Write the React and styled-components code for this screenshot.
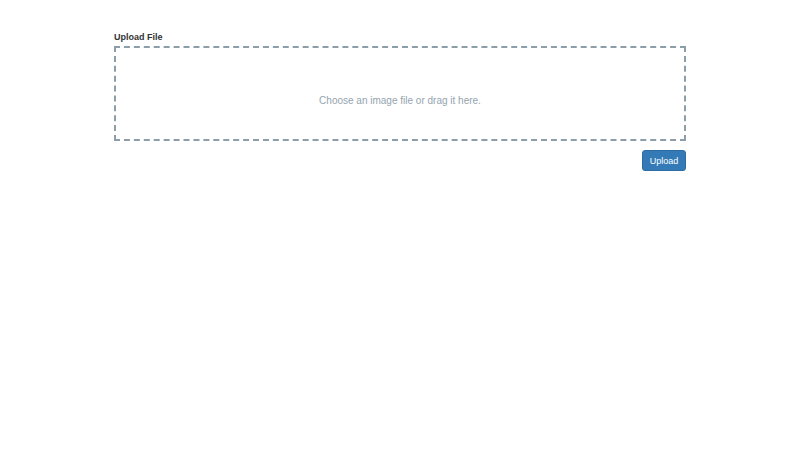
import React from "react";
import styled, { createGlobalStyle } from "styled-components";

const Global = createGlobalStyle`
  html, body { margin: 0; padding: 0; background: #fff; }
  body { font-family: "Liberation Sans", Arial, sans-serif; color: #333; }
`;

const Container = styled.div`
  width: 572px;
  margin: 0 auto;
  padding-top: 31px;
  display: flex;
  flex-direction: column;
`;

const Label = styled.label`
  font-size: 9px;
  font-weight: bold;
  color: #333;
  line-height: 12px;
  margin-bottom: 3px;
`;

const DropZone = styled.div`
  box-sizing: border-box;
  height: 95px;
  border: 2px dashed #8c9ea9;
  display: flex;
  align-items: center;
  justify-content: center;
  padding-top: 14px;
  font-size: 10px;
  color: #94a4ae;
`;

const Actions = styled.div`
  display: flex;
  justify-content: flex-end;
  margin-top: 9px;
`;

const Button = styled.button`
  box-sizing: border-box;
  width: 44px;
  height: 21px;
  padding: 0;
  border: 1px solid #2e6da4;
  border-radius: 3px;
  background: #337ab7;
  color: #fff;
  font-family: "Liberation Sans", Arial, sans-serif;
  font-size: 9px;
  cursor: pointer;
`;

export default function App() {
  return (
    <>
      <Global />
      <Container>
        <Label>Upload File</Label>
        <DropZone>Choose an image file or drag it here.</DropZone>
        <Actions>
          <Button>Upload</Button>
        </Actions>
      </Container>
    </>
  );
}
